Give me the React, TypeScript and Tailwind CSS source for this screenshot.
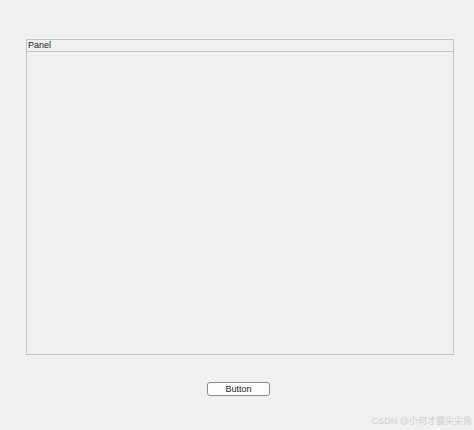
export default function App() {
  return (
    <div
      className="w-[474px] h-[430px] bg-[#f0f0f0] flex flex-col relative overflow-hidden"
      style={{ fontFamily: '"Liberation Sans", Arial, "Noto Sans CJK SC", sans-serif' }}
    >
      <div className="ml-[26px] mt-[39px] w-[428px] h-[316px] border border-[#c4c4c4] flex flex-col">
        <div className="h-[12px] border-b border-[#c4c4c4] flex items-center px-[1px] text-[9px] leading-none text-[#1a1a1a]">
          Panel
        </div>
        <div className="flex-1" />
      </div>
      <div className="flex justify-center mt-[27px]">
        <button
          type="button"
          className="ml-[3px] w-[63px] h-[14px] rounded-[3px] border border-[#8a8a8a] bg-[#fdfdfd] text-[9px] leading-none text-[#1a1a1a] flex items-center justify-center"
        >
          Button
        </button>
      </div>
      <div className="absolute right-[2px] bottom-[4px] text-[9px] leading-none text-[#cfcfcf]">
        CSDN @小何才露尖尖角
      </div>
    </div>
  );
}
